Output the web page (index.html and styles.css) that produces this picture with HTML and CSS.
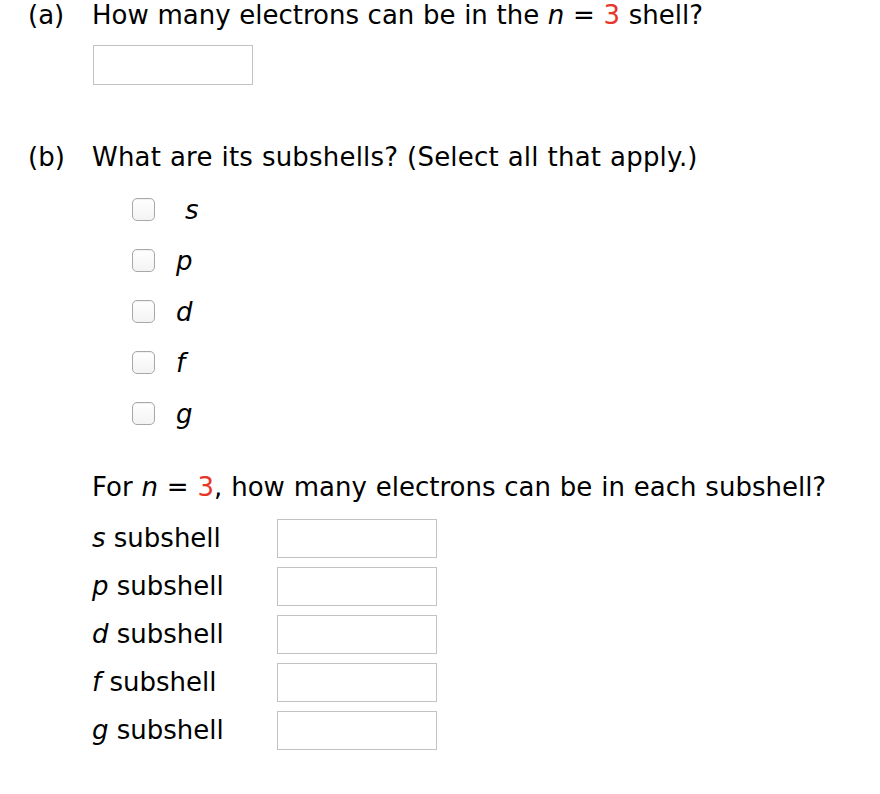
FILE: index.html
```html
<!DOCTYPE html>
<html>
<head>
<meta charset="utf-8">
<link rel="stylesheet" href="styles.css">
</head>
<body>
<div class="page">
  <section class="part part-a">
    <div class="q-line">
      <span class="q-label">(a)</span>
      <span class="q-text">How many electrons can be in the <i>n</i> = <span class="red">3</span> shell?</span>
    </div>
    <div class="answer-a">
      <div class="box box-a"></div>
    </div>
  </section>

  <section class="part part-b">
    <div class="q-line">
      <span class="q-label">(b)</span>
      <span class="q-text q-text-b">What are its subshells? (Select all that apply.)</span>
    </div>
    <ul class="options">
      <li class="option"><span class="check"></span><i class="opt-label opt-s">s</i></li>
      <li class="option"><span class="check"></span><i class="opt-label">p</i></li>
      <li class="option"><span class="check"></span><i class="opt-label">d</i></li>
      <li class="option"><span class="check"></span><i class="opt-label">f</i></li>
      <li class="option"><span class="check"></span><i class="opt-label">g</i></li>
    </ul>

    <div class="sub-q">For <i>n</i> = <span class="red">3</span>, how many electrons can be in each subshell?</div>
    <div class="rows">
      <div class="row"><span class="row-label"><i>s</i> subshell</span><div class="box"></div></div>
      <div class="row"><span class="row-label"><i>p</i> subshell</span><div class="box"></div></div>
      <div class="row"><span class="row-label"><i>d</i> subshell</span><div class="box"></div></div>
      <div class="row"><span class="row-label"><i>f</i> subshell</span><div class="box"></div></div>
      <div class="row"><span class="row-label"><i>g</i> subshell</span><div class="box"></div></div>
    </div>
  </section>
</div>
</body>
</html>
```

FILE: styles.css
```css
html, body {
  margin: 0;
  padding: 0;
  background: #ffffff;
}

body {
  font-family: "DejaVu Sans", Verdana, sans-serif;
  font-size: 26px;
  line-height: 30px;
  color: #000000;
}

.page {
  padding: 0 0 0 28px;
}

.q-line {
  display: flex;
  height: 30px;
  align-items: center;
}

.q-label {
  width: 64px;
  flex: none;
}

.q-text {
  word-spacing: 0.4px;
}

.q-text-b {
  letter-spacing: 0.2px;
}

.red {
  color: #e8352a;
}

.answer-a {
  padding: 15px 0 0 65px;
}

.box {
  width: 160px;
  height: 39px;
  box-sizing: border-box;
  border: 1px solid #c2c2c2;
  background: #ffffff;
}

.box-a {
  height: 40px;
}

.part-b {
  margin-top: 57px;
}

.options {
  list-style: none;
  margin: 12px 0 0 0;
  padding: 0 0 0 104px;
}

.option {
  display: flex;
  align-items: center;
  height: 51px;
}

.check {
  width: 23px;
  height: 23px;
  box-sizing: border-box;
  border: 1px solid #a8a8a8;
  border-radius: 5px;
  background: linear-gradient(#ffffff, #f3f3f3);
  box-shadow: inset 0 1px 1px rgba(0, 0, 0, 0.06);
  flex: none;
}

.opt-label {
  margin-left: 21px;
}

.opt-s {
  margin-left: 30px;
}

.sub-q {
  margin: 33px 0 0 64px;
  height: 30px;
  word-spacing: 0.6px;
}

.rows {
  margin: 12px 0 0 64px;
}

.row {
  display: flex;
  align-items: center;
  height: 48px;
}

.row-label {
  width: 185px;
  flex: none;
}
```
